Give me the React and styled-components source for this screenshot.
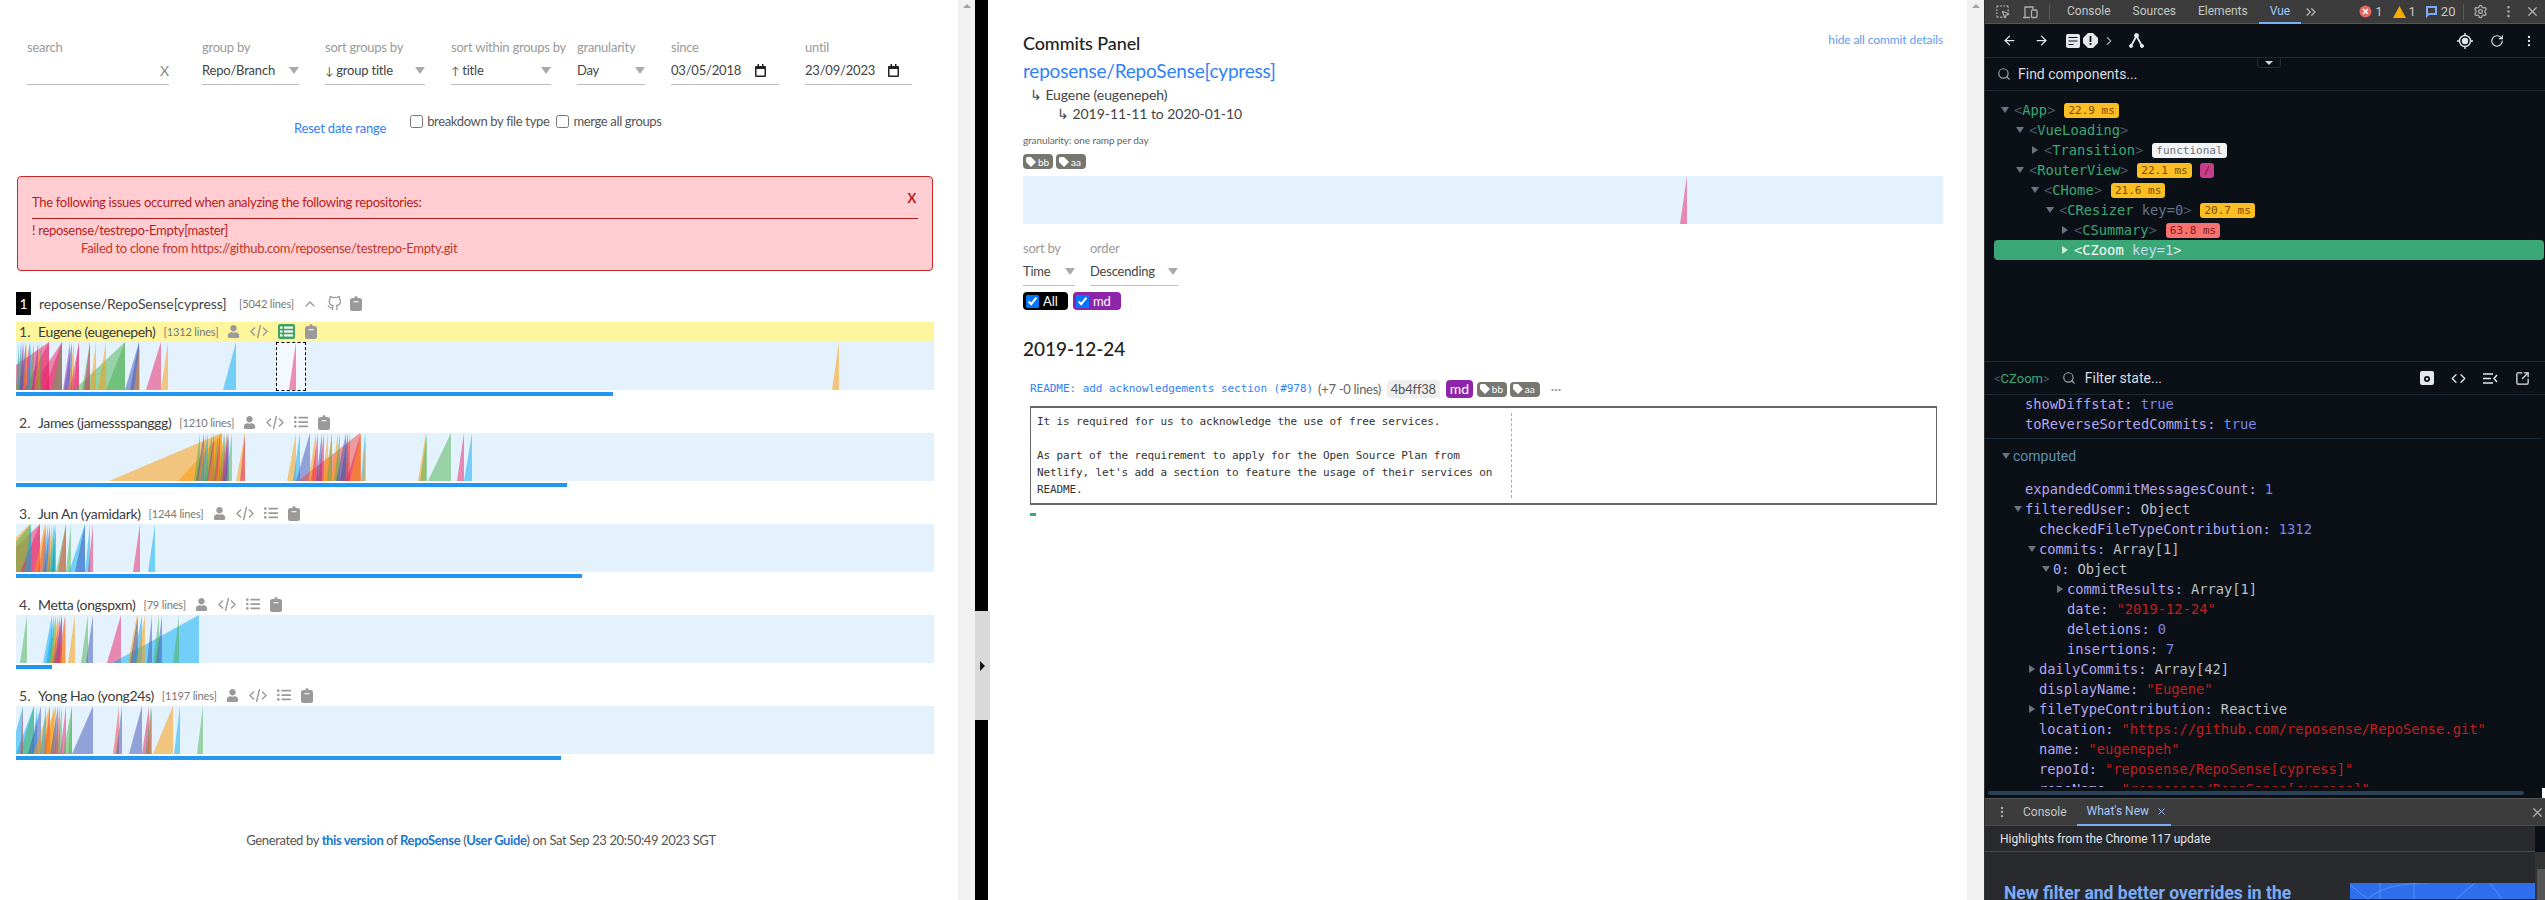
import React from 'react';
import styled, { createGlobalStyle } from 'styled-components';
import { FaUser, FaListUl } from 'react-icons/fa';
import { FiGithub } from 'react-icons/fi';
import {
  ArrowLeft, ArrowRight, ChevronUp, ChevronRight, ChevronsRight, Settings, EllipsisVertical, X, RotateCw,
  Search, Code, SquareArrowOutUpRight, SquareDashedMousePointer,
} from 'lucide-react';

const Global = createGlobalStyle`
  html, body { margin: 0; padding: 0; background: #fff; }
  body { width: 2545px; height: 900px; overflow: hidden; font-family: "Lato", "Liberation Sans", sans-serif; }
  * { box-sizing: border-box; }
`;

const C = { p: '#e91e63', b: '#03a9f4', g: '#4caf50', o: '#ff9800', i: '#3f51b5', r: '#f44336', u: '#9c27b0', t: '#009688' };

const eugene = [[-20,49,'p'],[16,19,'t'],[16,22,'o'],[17,21,'b'],[18,24,'g'],[19,23,'u'],[20,26,'i'],[22,30,'p'],[23,27,'o'],[24,49,'p'],[26,31,'b'],[28,34,'g'],[30,62,'p'],[32,38,'u'],[34,40,'o'],[36,42,'g'],[44,62,'p'],[52,62,'g'],[63,70,'u'],[64,72,'i'],[68,74,'o'],[70,79,'p'],[73,79,'p'],[74,125,'g'],[82,90,'g'],[84,90,'p'],[90,96,'o'],[98,106,'o'],[106,125,'g'],[125,139,'i'],[130,139,'i'],[134,140,'o'],[146,161,'p'],[161,168,'o'],[223,236,'b'],[289,296,'p'],[832,839,'o']];
const james = [[109,222,'o'],[178,222,'o'],[194,200,'g'],[196,204,'i'],[198,206,'o'],[200,208,'b'],[204,212,'g'],[207,214,'u'],[208,216,'o'],[212,218,'g'],[214,220,'p'],[216,224,'o'],[218,225,'g'],[220,227,'r'],[222,228,'u'],[224,229,'i'],[226,232,'g'],[236,245,'o'],[240,245,'p'],[287,296,'o'],[293,300,'b'],[296,310,'i'],[298,360,'r'],[308,316,'o'],[311,318,'p'],[316,322,'i'],[318,324,'p'],[322,328,'o'],[325,332,'o'],[327,332,'g'],[331,338,'o'],[334,340,'g'],[336,346,'i'],[340,348,'i'],[344,350,'r'],[346,361,'p'],[350,361,'o'],[361,365,'b'],[362,366,'o'],[418,426,'o'],[420,427,'g'],[428,451,'g'],[457,464,'p'],[464,472,'b']];
const junan = [[-10,40,'p'],[-20,30,'o'],[-10,31,'g'],[20,40,'p'],[24,31,'b'],[34,45,'o'],[38,46,'r'],[42,48,'b'],[44,50,'i'],[46,52,'o'],[48,54,'g'],[50,55,'b'],[52,56,'t'],[56,66,'g'],[58,66,'r'],[66,71,'g'],[69,85,'b'],[75,85,'i'],[85,90,'b'],[88,93,'p'],[133,140,'p'],[148,155,'b']];
const metta = [[20,27,'g'],[43,52,'b'],[46,54,'b'],[48,56,'g'],[50,58,'o'],[52,60,'r'],[54,62,'i'],[56,62,'p'],[58,65,'r'],[60,66,'o'],[68,75,'o'],[81,88,'g'],[86,93,'i'],[107,121,'p'],[112,199,'b'],[128,137,'o'],[130,138,'i'],[133,142,'b'],[136,145,'o'],[147,152,'i'],[153,159,'g'],[156,162,'i'],[173,179,'g']];
const yong = [[10,23,'b'],[16,34,'b'],[20,34,'g'],[20,23,'r'],[32,37,'b'],[28,41,'i'],[33,50,'o'],[38,56,'o'],[40,46,'b'],[44,50,'r'],[46,54,'o'],[50,58,'i'],[54,60,'r'],[57,62,'g'],[60,66,'p'],[63,72,'g'],[68,72,'g'],[72,93,'i'],[113,119,'r'],[116,122,'i'],[129,142,'i'],[142,149,'p'],[145,151,'g'],[147,152,'r'],[153,173,'o'],[174,180,'b'],[197,203,'g']];

const Ramp = styled.svg`display: block; width: 918px; height: 48px; background: #e3f2fd;`;
function Ramps({ items, from = 16, width = 918, highlight }) {
  return (
    <Ramp viewBox={`0 0 ${width} 48`} preserveAspectRatio="none" style={{ width }}>
      {highlight && <rect x={highlight[0] - from} width={highlight[1]} height="48" fill="#f3f9fe" />}
      {items.map(([a, b, c], i) => (
        <polygon key={i} points={`${a - from},48 ${b - from},0 ${b - from},48`} fill={C[c]} fillOpacity="0.5" />
      ))}
    </Ramp>
  );
}

const Page = styled.div`display: flex; width: 2545px; height: 900px; overflow: hidden;`;
const LeftPane = styled.div`display: flex; width: 975px; flex: none; height: 900px;`;
const LeftContent = styled.div`width: 958px; flex: none; color: #333;`;
const ScrollTrack = styled.div`
  width: 17px; flex: none; background: #f1f1f1; display: flex; justify-content: center; padding-top: 4px;
  &::before { content: ''; width: 0; height: 0; border-left: 4px solid transparent; border-right: 4px solid transparent; border-bottom: 4px solid #a3a3a3; }
`;
const Gutter = styled.div`width: 13px; flex: none; background: #000; position: relative;`;
const GutterHandle = styled.div`
  position: absolute; left: 0; top: 611px; width: 15px; height: 109px; background: #d9d9d9; display: flex; align-items: center; justify-content: center;
  &::before { content: ''; border-top: 5px solid transparent; border-bottom: 5px solid transparent; border-left: 5px solid #111; }
`;

const FilterBar = styled.div`display: flex; padding: 38px 0 0 27px; gap: 26px;`;
const Field = styled.div`width: ${p => p.$w}px; flex: none; margin-right: ${p => p.$mr || 0}px;`;
const FieldLabel = styled.div`font-size: 13px; line-height: 18px; color: #9a9a9a; letter-spacing: -0.25px; white-space: nowrap;`;
const FieldValue = styled.div`
  display: flex; align-items: center; justify-content: space-between; height: 29px; border-bottom: 1px solid #bdbdbd;
  font-size: 13px; color: #444; letter-spacing: -0.2px; white-space: nowrap;
`;
const Caret = styled.span`width: 0; height: 0; border-left: 5px solid transparent; border-right: 5px solid transparent; border-top: 7px solid #aaa;`;
const ClearX = styled.span`color: #888; font-size: 14px;`;
const Calendar = styled.svg`width: 11px; height: 13px; margin-right: 13px;`;
const Arrow = styled.span`font-size: 11px; color: #555;`;

const OptionsRow = styled.div`display: flex; align-items: flex-start; padding: 27px 0 0 294px; height: 53px;`;
const ResetLink = styled.a`font-size: 13px; line-height: 18px; color: #2f81f7; margin: 7px 24px 0 0; letter-spacing: -0.2px; white-space: nowrap;`;
const CheckLabel = styled.label`display: flex; align-items: center; gap: 4px; margin-right: 7px; font-size: 13px; line-height: 18px; color: #555; letter-spacing: -0.35px; white-space: nowrap;`;
const Box = styled.input`width: 13px; height: 13px; margin: 0;`;

const Alert = styled.div`
  position: relative; margin: 38px 0 0 17px; width: 916px; height: 95px; padding: 15px 14px 0; border: 1px solid #c62828; border-radius: 4px;
  background: #ffcdd2; color: #b71c1c; font-size: 13px; letter-spacing: -0.3px;
`;
const AlertTitle = styled.div`line-height: 20px; padding-bottom: 6px; border-bottom: 1px solid #b71c1c; margin-bottom: 2px;`;
const AlertRepo = styled.div`line-height: 17px; margin-top: 3px;`;
const AlertMsg = styled.div`line-height: 18px; margin-left: 49px; color: #c0392b;`;
const AlertClose = styled.span`position: absolute; right: 16px; top: 13px; font-size: 13px; font-weight: 700;`;

const RepoHead = styled.div`display: flex; align-items: center; height: 23px; margin: 21px 0 0 16px; color: #444;`;
const RepoIndex = styled.span`width: 15px; height: 23px; background: #000; color: #fff; font-size: 14px; line-height: 23px; text-align: center; margin-right: 8px;`;
const RepoName = styled.span`font-size: 14px; letter-spacing: -0.1px; width: 200px; white-space: nowrap;`;
const Lines = styled.span`font-size: 11px; color: #777; white-space: nowrap; letter-spacing: -0.15px;`;
const Gray = styled.span`display: inline-flex; align-items: center; color: #9a9a9a; margin-left: ${p => p.$ml}px;`;

const Member = styled.div`position: relative; margin: ${p => p.$first ? '7px' : '0'} 0 17px 16px; width: 918px;`;
const MemberHead = styled.div`
  display: flex; align-items: center; height: 20px; padding: 0 0 2px 3px; background: ${p => p.$on ? '#fff59d' : 'transparent'}; color: #444;
`;
const MemberRank = styled.span`font-size: 14px; width: 19px; flex: none;`;
const MemberName = styled.span`font-size: 14px; letter-spacing: -0.35px; white-space: nowrap; margin-right: 8px; color: #3b3b3b;`;
const Selection = styled.div`position: absolute; left: 260px; top: 20px; width: 30px; height: 49px; border: 1px dashed #000;`;
const Bar = styled.div`height: 4px; margin-top: 2px; background: #2196f3;`;
const Footer = styled.div`margin-top: 70px; line-height: 20px; text-align: center; font-size: 13px; letter-spacing: -0.38px; color: #555; padding-left: 4px;`;
const FootLink = styled.a`color: #1976d2; font-weight: 700;`;

const RightPane = styled.div`display: flex; width: 996px; flex: none; height: 900px;`;
const RightContent = styled.div`width: 979px; flex: none; padding: 31px 24px 0 35px; color: #333;`;
const PanelHead = styled.div`display: flex; justify-content: space-between;`;
const PanelTitle = styled.div`font-size: 18px; line-height: 24px; font-weight: 500; color: #222; letter-spacing: -0.1px;`;
const HideLink = styled.a`font-size: 12px; line-height: 18px; color: #5d9cf5; letter-spacing: -0.1px;`;
const RepoLink = styled.div`font-size: 19px; line-height: 28px; margin-top: 2px; color: #2f81f7; letter-spacing: -0.2px;`;
const SubLine = styled.div`font-size: 14px; line-height: 19px; color: #444; padding-left: ${p => p.$pl}px; letter-spacing: ${p => p.$ls}px;`;
const Gran = styled.div`font-size: 10px; line-height: 12px; color: #666; margin-top: 11px; letter-spacing: -0.1px;`;
const TagRow = styled.div`display: flex; gap: 3px; margin-top: ${p => p.$mt}px;`;
const Tag = styled.span`
  display: inline-flex; align-items: center; gap: 2px; height: 15px; padding: 0 3px; border-radius: 4px; background: #77776f; color: #fff; font-size: 10px; width: 30px; flex: none;
`;
const TagGlyph = styled.svg`width: 10px; height: 10px; flex: none;`;
const RampWrap = styled.div`margin-top: 7px;`;
const SortRow = styled.div`display: flex; gap: 15px; margin-top: 15px;`;
const PillRow = styled.div`display: flex; gap: 5px; margin-top: 6px;`;
const Pill = styled.label`
  display: inline-flex; align-items: center; gap: 4px; height: 18px; padding: 0 10px 0 3px; border-radius: 4px; background: ${p => p.$bg}; color: #fff; font-size: 13px;
`;
const DateHead = styled.div`font-size: 19px; line-height: 24px; font-weight: 500; color: #222; margin-top: 27px;`;
const CommitRow = styled.div`display: flex; align-items: center; height: 18px; margin: 19px 0 0 7px;`;
const CommitTitle = styled.a`font: 11px/18px "DejaVu Sans Mono", monospace; color: #2f81f7; white-space: nowrap; letter-spacing: -0.04px;`;
const CommitStat = styled.span`font-size: 13px; color: #666; margin-left: 5px; letter-spacing: -0.3px; white-space: nowrap;`;
const Hash = styled.span`background: #eee; color: #555; font-size: 13px; width: 53px; height: 18px; line-height: 18px; text-align: center; border-radius: 4px; margin-left: 6px; letter-spacing: -0.2px;`;
const FileChip = styled.span`background: #8e24aa; color: #fff; font-size: 14px; width: 27px; height: 18px; line-height: 18px; text-align: center; border-radius: 4px; margin: 0 4px 0 6px;`;
const Dots = styled.span`color: #999; font-size: 6px; margin-left: 11px;`;
const MsgBox = styled.div`
  display: flex; width: 907px; height: 99px; margin: 8px 0 0 7px; border: 1px solid #666; border-top-width: 2px; border-bottom-width: 2px; padding: 5px 0 5px 6px;
`;
const MsgText = styled.pre`
  margin: 0; width: 475px; flex: none; border-right: 1px dashed #aaa; font: 11px/17px "DejaVu Sans Mono", monospace; color: #333; letter-spacing: -0.12px;
`;
const Stat = styled.div`width: 6px; height: 3px; background: #3ba776; margin: 8px 0 0 7px;`;

const Dev = styled.div`width: 561px; flex: none; height: 900px; display: flex; flex-direction: column; background: #0b1016; color: #c7ccd1; font-family: "Roboto", sans-serif; border-left: 1px solid #333;`;
const TopBar = styled.div`height: 24px; flex: none; display: flex; align-items: center; background: #3c3c3c; color: #c4c7c5; font-size: 12px; padding-left: 10px; border-bottom: 1px solid #555;`;
const TopIcon = styled.span`display: inline-flex; align-items: center; color: #aeb1b3; margin-left: ${p => p.$ml || 0}px;`;
const Sep = styled.span`width: 1px; height: 16px; background: #5a5a5a; margin: 0 ${p => p.$r}px 0 ${p => p.$l}px;`;
const DevTab = styled.span`
  height: 24px; line-height: 23px; padding: 0 11px; color: ${p => p.$on ? '#a8c7fa' : '#c4c7c5'}; border-bottom: ${p => p.$on ? '2px solid #7cacf8' : '0'}; white-space: nowrap;
`;
const Count = styled.span`font-size: 13px; color: #c4c7c5; margin-left: ${p => p.$ml || 3}px;`;
const VueBar = styled.div`height: 34px; flex: none; display: flex; align-items: center; border-bottom: 1px solid #1b2836; color: #e5e7eb; padding-left: 17px;`;
const SearchBar = styled.div`position: relative; height: 33px; flex: none; display: flex; align-items: center; gap: 7px; border-bottom: 1px solid #1b2836; padding-left: 12px; font-size: 14px; color: #d6dae0;`;
const ChevTab = styled.span`
  position: absolute; left: 272px; top: 0; width: 24px; height: 10px; border: 1px solid #1f2f40; border-top: 0; border-radius: 0 0 4px 4px; display: flex; justify-content: center; padding-top: 3px;
  &::before { content: ''; border-left: 4px solid transparent; border-right: 4px solid transparent; border-top: 4px solid #d1d5db; height: 0; }
`;
const Tree = styled.div`height: 271px; flex: none; padding: 9px 0 0 0; border-bottom: 1px solid #1b2836; font: 13.75px/20px "DejaVu Sans Mono", monospace;`;
const TreeRow = styled.div`
  display: flex; align-items: center; height: 20px; white-space: pre;
  padding-left: ${p => (p.$sel ? 7 : 16) + p.$level * 15}px;
  ${p => p.$sel ? 'background: #3ba776; border-radius: 4px; margin: 0 1px 0 9px;' : ''}
`;
const Twist = styled.span`
  width: 13px; flex: none; display: inline-flex;
  &::before { content: ''; ${p => p.$dir === 'down'
    ? `border-left: 4px solid transparent; border-right: 4px solid transparent; border-top: 6px solid ${p.$light ? '#cfe9dc' : '#6b7280'};`
    : p.$dir === 'right' ? `border-top: 4px solid transparent; border-bottom: 4px solid transparent; border-left: 6px solid ${p.$light ? '#cfe9dc' : '#6b7280'}; margin-left: 1px;` : ''} }
`;
const StateTwist = styled(Twist)`width: 11px;`;
const Bracket = styled.span`color: ${p => p.$sel ? '#e5f5ee' : '#475569'};`;
const CompName = styled.span`color: ${p => p.$sel ? '#fff' : '#3ba776'};`;
const CompKey = styled.span`color: ${p => p.$sel ? '#c4d7f5' : '#64748b'};`;
const Badge = styled.span`
  margin-left: ${p => p.$ml || 9}px; height: 15px; padding: 0 4px; border-radius: 3px; font: 11px/15px "DejaVu Sans Mono", monospace;
  background: ${p => p.$bg}; color: ${p => p.$fg};
`;
const StateHead = styled.div`height: 33px; flex: none; display: flex; align-items: center; border-bottom: 1px solid #1b2836; padding-left: 9px; font-size: 14px; color: #d6dae0; white-space: nowrap;`;
const SmallComp = styled.span`color: #3ba776; font-size: 13px; margin-right: 12px;`;
const FilterText = styled.span`margin-left: 9px;`;
const StateScroll = styled.div`height: 392px; flex: none; overflow: hidden; font: 13.75px/20px "DejaVu Sans Mono", monospace;`;
const StateInner = styled.div`margin-top: -1px;`;
const StateRow = styled.div`display: flex; align-items: center; height: 20px; padding-left: ${p => p.$pl}px; white-space: nowrap;`;
const StateKey = styled.span`color: #b3a6f0;`;
const StateVal = styled.span`color: ${p => ({ b: '#7c86e8', s: '#c11f1f', o: '#b9c0c8' }[p.$t])}; margin-left: 8px;`;
const SectionGap = styled.div`height: 5px; border-bottom: 1px solid #1b2836; margin-right: 3px;`;
const SectionHead = styled.div`display: flex; align-items: center; height: 40px; padding: 0 0 6px 17px; gap: 3px; font: 14px "Roboto", sans-serif; color: #5f8fb0;`;
const HeadTwist = styled(Twist)`width: 8px;`;
const HScroll = styled.div`
  position: relative; height: 11px; flex: none; padding: 4px 21px 0 3px;
  &::before { content: ''; display: block; height: 4px; border-radius: 2px; background: #2b4158; }
  &::after { content: ''; position: absolute; right: 0; top: 1px; width: 3px; height: 10px; background: #fff; }
`;
const DrawerTabs = styled.div`height: 28px; flex: none; display: flex; align-items: center; background: #3c3c3c; border-top: 1px solid #555; border-bottom: 1px solid #4a4a4a; color: #c4c7c5; font-size: 12px; padding-left: 10px;`;
const DrawerTab = styled.span`
  display: inline-flex; align-items: center; gap: 7px; height: 27px; padding: 0 ${p => p.$on ? 4 : 10}px 0 10px; margin-left: ${p => p.$ml || 0}px; color: ${p => p.$on ? '#a8c7fa' : '#c4c7c5'}; border-bottom: ${p => p.$on ? '2px solid #7cacf8' : '0'}; white-space: nowrap;
`;
const Highlights = styled.div`height: 26px; flex: none; display: flex; align-items: center; background: #292a2d; border-bottom: 1px solid #4a4a4a; color: #e3e3e3; font-size: 12px; padding-left: 15px; margin-right: 10px;`;
const Whats = styled.div`flex: 1; position: relative; background: #292a2d; overflow: hidden;`;
const WhatsHead = styled.div`position: absolute; left: 19px; top: 31px; font-size: 17.5px; font-weight: 700; line-height: 20px; color: #7cacf8; white-space: nowrap;`;
const WhatsImg = styled.svg`position: absolute; left: 365px; top: 31px; width: 185px; height: 16px; background: #2f6fed;`;
const WhatsScroll = styled.div`position: absolute; right: 0; top: 0; bottom: 0; width: 10px; background: #333; &::after { content: ''; position: absolute; left: 2px; right: 0; top: 17px; bottom: 0; background: #555; }`;

const ClipSvg = styled.svg`display: block;`;
function Clip({ h = 15 }) {
  return (
    <ClipSvg width={h * 0.8} height={h} viewBox="0 0 12 15">
      <path d="M4.5 1.5a1.5 1.5 0 0 1 3 0V2h2A2.5 2.5 0 0 1 12 4.5V13a2 2 0 0 1-2 2H2a2 2 0 0 1-2-2V4.5A2.5 2.5 0 0 1 2.5 2h2z" fill="currentColor" />
      <rect x="3.5" y="5" width="5" height="1.3" fill="#fff" opacity=".8" />
    </ClipSvg>
  );
}
function CodeGlyph() {
  return (
    <svg width="18" height="15" viewBox="0 0 18 15" fill="none" stroke="currentColor" strokeWidth="1.4">
      <path d="M5 3.5 1 7.5l4 4M13 3.5l4 4-4 4M10.5 1 7.5 14" />
    </svg>
  );
}
function GreenList() {
  return (
    <svg width="17" height="15" viewBox="0 0 17 15">
      <rect width="17" height="15" rx="2" fill="#3ba55d" />
      <g fill="#fff"><rect x="2" y="2.5" width="2.5" height="2.2" /><rect x="6" y="2.5" width="9" height="2.2" /><rect x="2" y="6.4" width="2.5" height="2.2" /><rect x="6" y="6.4" width="9" height="2.2" /><rect x="2" y="10.3" width="2.5" height="2.2" /><rect x="6" y="10.3" width="9" height="2.2" /></g>
    </svg>
  );
}
function TagIcon() {
  return (
    <TagGlyph viewBox="0 0 10 10"><path d="M0 1.5A1.5 1.5 0 0 1 1.5 0H5l5 5-5 5-5-5z" fill="#fff" /></TagGlyph>
  );
}
function Cal() {
  return (
    <Calendar viewBox="0 0 11 13"><path d="M1 2h9a1 1 0 0 1 1 1v9a1 1 0 0 1-1 1H1a1 1 0 0 1-1-1V3a1 1 0 0 1 1-1zm.5 3v6.5h8V5z" fill="#222" /><rect x="2.5" y="0" width="1.5" height="3" fill="#222" /><rect x="7" y="0" width="1.5" height="3" fill="#222" /></Calendar>
  );
}

const members = [
  { n: 'Eugene (eugenepeh)', l: '[1312 lines]', ramps: eugene, w: 597, on: true },
  { n: 'James (jamessspanggg)', l: '[1210 lines]', ramps: james, w: 551 },
  { n: 'Jun An (yamidark)', l: '[1244 lines]', ramps: junan, w: 566 },
  { n: 'Metta (ongspxm)', l: '[79 lines]', ramps: metta, w: 36 },
  { n: 'Yong Hao (yong24s)', l: '[1197 lines]', ramps: yong, w: 545 },
];

const tree = [
  { level: 0, dir: 'down', name: 'App', b: ['22.9 ms', '#fbbf24', '#7c4a03'] },
  { level: 1, dir: 'down', name: 'VueLoading' },
  { level: 2, dir: 'right', name: 'Transition', b: ['functional', '#f3f4f6', '#6b7280'] },
  { level: 1, dir: 'down', name: 'RouterView', b: ['22.1 ms', '#fbbf24', '#7c4a03'], extra: true },
  { level: 2, dir: 'down', name: 'CHome', b: ['21.6 ms', '#fbbf24', '#7c4a03'] },
  { level: 3, dir: 'down', name: 'CResizer', k: ' key=0', b: ['20.7 ms', '#fbbf24', '#7c4a03'] },
  { level: 4, dir: 'right', name: 'CSummary', b: ['63.8 ms', '#f87171', '#7f1d1d'] },
  { level: 4, dir: 'right', name: 'CZoom', k: ' key=1', sel: true },
];

const state = [
  [40, 'showDiffstat', 'true', 'b'], [40, 'toReverseSortedCommits', 'true', 'b'], 'gap', 'head',
  [40, 'expandedCommitMessagesCount', '1', 'b'], [40, 'filteredUser', 'Object', 'o', 'down'], [54, 'checkedFileTypeContribution', '1312', 'b'],
  [54, 'commits', 'Array[1]', 'o', 'down'], [68, '0', 'Object', 'o', 'down'], [82, 'commitResults', 'Array[1]', 'o', 'right'],
  [82, 'date', '"2019-12-24"', 's'], [82, 'deletions', '0', 'b'], [82, 'insertions', '7', 'b'],
  [54, 'dailyCommits', 'Array[42]', 'o', 'right'], [54, 'displayName', '"Eugene"', 's'], [54, 'fileTypeContribution', 'Reactive', 'o', 'right'],
  [54, 'location', '"https://github.com/reposense/RepoSense.git"', 's'], [54, 'name', '"eugenepeh"', 's'],
  [54, 'repoId', '"reposense/RepoSense[cypress]"', 's'], [54, 'repoName', '"reposense/RepoSense[cypress]"', 's'],
];

export default function App() {
  return (
    <Page>
      <Global />
      <LeftPane>
        <LeftContent>
          <FilterBar>
            <Field $w={142} $mr={7}><FieldLabel>search</FieldLabel><FieldValue><span /><ClearX>X</ClearX></FieldValue></Field>
            <Field $w={97}><FieldLabel>group by</FieldLabel><FieldValue>Repo/Branch<Caret /></FieldValue></Field>
            <Field $w={100}><FieldLabel>sort groups by</FieldLabel><FieldValue><span><Arrow>↓</Arrow> group title</span><Caret /></FieldValue></Field>
            <Field $w={100}><FieldLabel>sort within groups by</FieldLabel><FieldValue><span><Arrow>↑</Arrow> title</span><Caret /></FieldValue></Field>
            <Field $w={68}><FieldLabel>granularity</FieldLabel><FieldValue>Day<Caret /></FieldValue></Field>
            <Field $w={108}><FieldLabel>since</FieldLabel><FieldValue>03/05/2018<Cal /></FieldValue></Field>
            <Field $w={107}><FieldLabel>until</FieldLabel><FieldValue>23/09/2023<Cal /></FieldValue></Field>
          </FilterBar>
          <OptionsRow>
            <ResetLink>Reset date range</ResetLink>
            <CheckLabel><Box type="checkbox" readOnly />breakdown by file type</CheckLabel>
            <CheckLabel><Box type="checkbox" readOnly />merge all groups</CheckLabel>
          </OptionsRow>
          <Alert>
            <AlertTitle>The following issues occurred when analyzing the following repositories:</AlertTitle>
            <AlertClose>X</AlertClose>
            <AlertRepo>! reposense/testrepo-Empty[master]</AlertRepo>
            <AlertMsg>Failed to clone from https://github.com/reposense/testrepo-Empty.git</AlertMsg>
          </Alert>
          <RepoHead>
            <RepoIndex>1</RepoIndex>
            <RepoName>reposense/RepoSense[cypress]</RepoName>
            <Lines>[5042 lines]</Lines>
            <Gray $ml={8}><ChevronUp size={16} /></Gray>
            <Gray $ml={9}><FiGithub size={15} /></Gray>
            <Gray $ml={8}><Clip /></Gray>
          </RepoHead>
          {members.map((m, i) => (
            <Member key={m.n} $first={i === 0}>
              <MemberHead $on={m.on}>
                <MemberRank>{i + 1}.</MemberRank>
                <MemberName>{m.n}</MemberName>
                <Lines>{m.l}</Lines>
                <Gray $ml={9}><FaUser size={13} /></Gray>
                <Gray $ml={10}><CodeGlyph /></Gray>
                <Gray $ml={10}>{m.on ? <GreenList /> : <FaListUl size={14} />}</Gray>
                <Gray $ml={10}><Clip /></Gray>
              </MemberHead>
              <Ramps items={m.ramps} highlight={m.on ? [276, 30] : null} />
              {m.on && <Selection />}
              <Bar style={{ width: m.w }} />
            </Member>
          ))}
          <Footer>
            Generated by <FootLink>this version</FootLink> of <FootLink>RepoSense</FootLink> (<FootLink>User Guide</FootLink>) on Sat Sep 23 20:50:49 2023 SGT
          </Footer>
        </LeftContent>
        <ScrollTrack />
      </LeftPane>
      <Gutter><GutterHandle /></Gutter>
      <RightPane>
        <RightContent>
          <PanelHead><PanelTitle>Commits Panel</PanelTitle><HideLink>hide all commit details</HideLink></PanelHead>
          <RepoLink>reposense/RepoSense[cypress]</RepoLink>
          <SubLine $pl={7} $ls={-0.1}>↳ Eugene (eugenepeh)</SubLine>
          <SubLine $pl={34} $ls={-0.05}>↳ 2019-11-11 to 2020-01-10</SubLine>
          <Gran>granularity: one ramp per day</Gran>
          <TagRow $mt={8}><Tag><TagIcon />bb</Tag><Tag><TagIcon />aa</Tag></TagRow>
          <RampWrap><Ramps items={[[1680, 1687, 'p']]} from={1023} width={920} /></RampWrap>
          <SortRow>
            <Field $w={52}><FieldLabel>sort by</FieldLabel><FieldValue>Time<Caret /></FieldValue></Field>
            <Field $w={88}><FieldLabel>order</FieldLabel><FieldValue>Descending<Caret /></FieldValue></Field>
          </SortRow>
          <PillRow>
            <Pill $bg="#000"><Box type="checkbox" checked readOnly />All</Pill>
            <Pill $bg="#8e24aa"><Box type="checkbox" checked readOnly />md</Pill>
          </PillRow>
          <DateHead>2019-12-24</DateHead>
          <CommitRow>
            <CommitTitle>README: add acknowledgements section (#978)</CommitTitle>
            <CommitStat>(+7 -0 lines)</CommitStat>
            <Hash>4b4ff38</Hash>
            <FileChip>md</FileChip>
            <TagRow $mt={0}><Tag><TagIcon />bb</Tag><Tag><TagIcon />aa</Tag></TagRow>
            <Dots>•••</Dots>
          </CommitRow>
          <MsgBox>
            <MsgText>{`It is required for us to acknowledge the use of free services.

As part of the requirement to apply for the Open Source Plan from
Netlify, let's add a section to feature the usage of their services on
README.`}</MsgText>
          </MsgBox>
          <Stat />
        </RightContent>
        <ScrollTrack />
      </RightPane>
      <Dev>
        <TopBar>
          <TopIcon><SquareDashedMousePointer size={15} /></TopIcon>
          <TopIcon $ml={13}><svg width="15" height="14" viewBox="0 0 15 14" fill="none" stroke="currentColor" strokeWidth="1.3"><path d="M2 12V2h8v2M0 12.5h7" /><rect x="8.5" y="5" width="5.5" height="7.5" rx="1" /></svg></TopIcon>
          <Sep $l={11} $r={6} />
          <DevTab>Console</DevTab>
          <DevTab>Sources</DevTab>
          <DevTab>Elements</DevTab>
          <DevTab $on>Vue</DevTab>
          <TopIcon $ml={2}><ChevronsRight size={16} /></TopIcon>
          <TopIcon $ml={40}><svg width="13" height="13" viewBox="0 0 13 13"><circle cx="6.5" cy="6.5" r="6" fill="#e46962" /><path d="M4 4l5 5M9 4l-5 5" stroke="#fff" strokeWidth="1.4" /></svg></TopIcon>
          <Count>1</Count>
          <TopIcon $ml={10}><svg width="13" height="12" viewBox="0 0 13 12"><path d="M6.5 0 13 12H0z" fill="#f9ab00" /></svg></TopIcon>
          <Count>1</Count>
          <TopIcon $ml={10}><svg width="11" height="12" viewBox="0 0 11 12"><path d="M0 0h11v9H3l-3 3z" fill="#7cacf8" /><rect x="2" y="2" width="7" height="5" fill="#3c3c3c" /></svg></TopIcon>
          <Count $ml={4}>20</Count>
          <Sep $l={8} $r={9} />
          <TopIcon><Settings size={15} /></TopIcon>
          <TopIcon $ml={13}><EllipsisVertical size={15} /></TopIcon>
          <TopIcon $ml={9}><X size={15} /></TopIcon>
        </TopBar>
        <VueBar>
          <ArrowLeft size={15} />
          <TopIcon $ml={17}><ArrowRight size={15} color="#e5e7eb" /></TopIcon>
          <TopIcon $ml={17}><svg width="14" height="14" viewBox="0 0 14 14"><rect width="14" height="14" rx="2" fill="#e5e7eb" /><path d="M2.5 3.5h9M2.5 7h9M2.5 10.5h5" stroke="#0b1016" strokeWidth="1.2" /></svg></TopIcon>
          <TopIcon $ml={3}><svg width="15" height="15" viewBox="0 0 15 15"><path d="M5 0h5l5 5v5l-5 5H5l-5-5V5z" fill="#e5e7eb" /><rect x="6.6" y="3" width="1.8" height="6" fill="#0b1016" /><rect x="6.6" y="10" width="1.8" height="1.8" fill="#0b1016" /></svg></TopIcon>
          <TopIcon $ml={4}><ChevronRight size={14} color="#9ca3af" /></TopIcon>
          <TopIcon $ml={13}><svg width="15" height="15" viewBox="0 0 15 15" fill="#e5e7eb" stroke="#e5e7eb"><circle cx="7.5" cy="2.5" r="2" /><circle cx="2" cy="13" r="1.5" /><circle cx="13" cy="13" r="1.5" /><path d="M7.5 3 2 13M7.5 3 13 13" strokeWidth="1.8" /></svg></TopIcon>
          <TopIcon $ml={313}><svg width="16" height="16" viewBox="0 0 16 16" fill="none" stroke="#e5e7eb" strokeWidth="1.4"><circle cx="8" cy="8" r="5.5" /><circle cx="8" cy="8" r="2.5" fill="#e5e7eb" /><path d="M8 0v2.5M8 13.5V16M0 8h2.5M13.5 8H16" /></svg></TopIcon>
          <TopIcon $ml={17}><RotateCw size={14} color="#e5e7eb" /></TopIcon>
          <TopIcon $ml={18}><EllipsisVertical size={14} color="#e5e7eb" /></TopIcon>
        </VueBar>
        <SearchBar>
          <ChevTab />
          <Search size={14} color="#9ca3af" />
          <span>Find components...</span>
        </SearchBar>
        <Tree>
          {tree.map(r => (
            <TreeRow key={r.name} $level={r.level} $sel={r.sel}>
              <Twist $dir={r.dir} $light={r.sel} />
              <Bracket $sel={r.sel}>&lt;</Bracket>
              <CompName $sel={r.sel}>{r.name}</CompName>
              {r.k && <CompKey $sel={r.sel}>{r.k}</CompKey>}
              <Bracket $sel={r.sel}>&gt;</Bracket>
              {r.b && <Badge $bg={r.b[1]} $fg={r.b[2]}>{r.b[0]}</Badge>}
              {r.extra && <Badge $ml={8} $bg="#c93d8e" $fg="#7f1d1d">/</Badge>}
            </TreeRow>
          ))}
        </Tree>
        <StateHead>
          <SmallComp><Bracket>&lt;</Bracket>CZoom<Bracket>&gt;</Bracket></SmallComp>
          <Search size={14} color="#9ca3af" />
          <FilterText>Filter state...</FilterText>
          <TopIcon $ml={258}><svg width="14" height="14" viewBox="0 0 14 14"><rect width="14" height="14" rx="2" fill="#e5e7eb" /><circle cx="7" cy="8" r="3" fill="#0b1016" /><circle cx="7" cy="8" r="1.2" fill="#e5e7eb" /></svg></TopIcon>
          <TopIcon $ml={17}><Code size={15} color="#e5e7eb" /></TopIcon>
          <TopIcon $ml={17}><svg width="15" height="13" viewBox="0 0 15 13" fill="none" stroke="#e5e7eb" strokeWidth="1.5"><path d="M0 2h10M0 6.5h8M0 11h10M14 3l-3 3.5 3 3.5" /></svg></TopIcon>
          <TopIcon $ml={17}><SquareArrowOutUpRight size={15} color="#e5e7eb" /></TopIcon>
        </StateHead>
        <StateScroll>
          <StateInner>
            {state.map((s, i) => {
              if (s === 'gap') return <SectionGap key={i} />;
              if (s === 'head') return <SectionHead key={i}><HeadTwist $dir="down" />computed</SectionHead>;
              const [k, key, val, t, dir] = s;
              return (
                <StateRow key={i} $pl={dir ? k - 11 : k}>
                  {dir && <StateTwist $dir={dir} />}
                  <StateKey>{key}:</StateKey>
                  <StateVal $t={t}>{val}</StateVal>
                </StateRow>
              );
            })}
          </StateInner>
        </StateScroll>
        <HScroll />
        <DrawerTabs>
          <TopIcon><EllipsisVertical size={14} /></TopIcon>
          <DrawerTab $ml={4}>Console</DrawerTab>
          <DrawerTab $on>What's New<X size={11} /></DrawerTab>
          <TopIcon $ml={359}><X size={15} /></TopIcon>
        </DrawerTabs>
        <Highlights>Highlights from the Chrome 117 update</Highlights>
        <Whats>
          <WhatsHead>New filter and better overrides in the</WhatsHead>
          <WhatsImg viewBox="0 0 185 16" fill="none" stroke="#5b8ff5" strokeWidth="1">
            <path d="M0 2 18 16M30 0v16M64 0v16M106 16 125 0M140 0l12 16M18 16c10-10 30-16 60-16" />
          </WhatsImg>
          <WhatsScroll />
        </Whats>
      </Dev>
    </Page>
  );
}
